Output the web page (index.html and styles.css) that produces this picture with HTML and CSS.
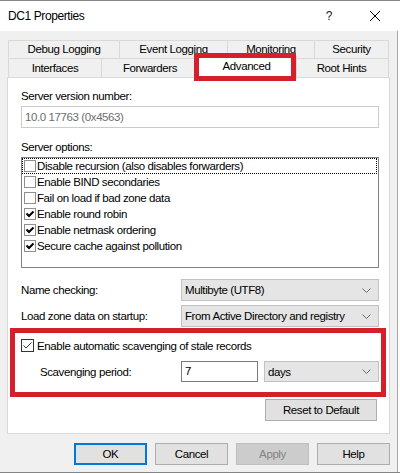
FILE: index.html
```html
<!DOCTYPE html>
<html lang="en">
<head>
    <meta charset="UTF-8">
    <title>DC1 Properties</title>
    <link rel="stylesheet" href="styles.css">
</head>
<body>
    <div class="window">
        <!-- Title Bar -->
        <div class="titlebar">
            <span class="title">DC1 Properties</span>
            <span class="caption-btn help">?</span>
            <span class="caption-btn">
                <svg width="10" height="10" viewBox="0 0 10 10"><path d="M0 0 L10 10 M10 0 L0 10" stroke="#000" stroke-width="1" fill="none"/></svg>
            </span>
        </div>

        <div class="dialog">
            <!-- Tabs -->
            <div class="tabs">
                <div class="tab-row">
                    <div class="tab w-debug">Debug Logging</div>
                    <div class="tab w-event">Event Logging</div>
                    <div class="tab w-monitor">Monitoring</div>
                    <div class="tab w-security">Security</div>
                </div>
                <div class="tab-row front">
                    <div class="tab w-interfaces">Interfaces</div>
                    <div class="tab w-forwarders">Forwarders</div>
                    <div class="tab selected">Advanced<span class="highlight"></span></div>
                    <div class="tab w-roothints">Root Hints</div>
                </div>
            </div>

            <!-- Advanced Panel -->
            <div class="panel">
                <div class="field-label">Server version number:</div>
                <div class="readonly-box">10.0 17763 (0x4563)</div>

                <div class="field-label options-label">Server options:</div>
                <div class="listbox">
                    <div class="list-item focused"><span class="cb"></span>Disable recursion (also disables forwarders)</div>
                    <div class="list-item"><span class="cb"></span>Enable BIND secondaries</div>
                    <div class="list-item"><span class="cb"></span>Fail on load if bad zone data</div>
                    <div class="list-item"><span class="cb"><svg width="10" height="10" viewBox="0 0 10 10"><path d="M1.5 4.5 L4 7 L8.5 2.5" stroke="#000" stroke-width="2" fill="none"/></svg></span>Enable round robin</div>
                    <div class="list-item"><span class="cb"><svg width="10" height="10" viewBox="0 0 10 10"><path d="M1.5 4.5 L4 7 L8.5 2.5" stroke="#000" stroke-width="2" fill="none"/></svg></span>Enable netmask ordering</div>
                    <div class="list-item"><span class="cb"><svg width="10" height="10" viewBox="0 0 10 10"><path d="M1.5 4.5 L4 7 L8.5 2.5" stroke="#000" stroke-width="2" fill="none"/></svg></span>Secure cache against pollution</div>
                </div>

                <div class="option-row first-row">
                    <span class="row-label">Name checking:</span>
                    <div class="combo">Multibyte (UTF8)<svg class="chevron" width="9" height="5" viewBox="0 0 9 5"><path d="M0.5 0.5 L4.5 4.5 L8.5 0.5" stroke="#6b6b6b" fill="none"/></svg></div>
                </div>
                <div class="option-row">
                    <span class="row-label">Load zone data on startup:</span>
                    <div class="combo">From Active Directory and registry<svg class="chevron" width="9" height="5" viewBox="0 0 9 5"><path d="M0.5 0.5 L4.5 4.5 L8.5 0.5" stroke="#6b6b6b" fill="none"/></svg></div>
                </div>

                <!-- Scavenging (highlighted) -->
                <div class="scavenging">
                    <div class="check-row">
                        <span class="checkbox"><svg width="11" height="11" viewBox="0 0 11 11"><path d="M1.5 5.5 L4 8 L9.5 2.5" stroke="#333" stroke-width="1" fill="none"/></svg></span>
                        Enable automatic scavenging of stale records
                    </div>
                    <div class="option-row period-row">
                        <span class="row-label indent">Scavenging period:</span>
                        <div class="textbox">7</div>
                        <div class="combo">days<svg class="chevron" width="9" height="5" viewBox="0 0 9 5"><path d="M0.5 0.5 L4.5 4.5 L8.5 0.5" stroke="#6b6b6b" fill="none"/></svg></div>
                    </div>
                </div>

                <div class="reset-row">
                    <button class="btn reset">Reset to Default</button>
                </div>
            </div>

            <!-- Dialog Buttons -->
            <div class="buttons">
                <button class="btn default">OK</button>
                <button class="btn">Cancel</button>
                <button class="btn disabled">Apply</button>
                <button class="btn">Help</button>
            </div>
        </div>
    </div>
</body>
</html>
```

FILE: styles.css
```css
/* General Reset */
* {
    margin: 0;
    padding: 0;
    box-sizing: border-box;
}

body {
    font-family: "Liberation Sans", Arial, sans-serif;
    font-size: 11.5px;
    letter-spacing: -0.4px;
    color: #000;
    background-color: #fff;
    width: 400px;
    height: 474px;
    overflow: hidden;
}

.window {
    height: 473px;
    border-top: 1px solid #858585;
    border-bottom: 1px solid #858585;
    display: flex;
    flex-direction: column;
}

/* Title Bar */
.titlebar {
    height: 30px;
    display: flex;
    align-items: center;
    padding-right: 2px;
}

.title {
    flex: 1;
    padding-left: 8px;
    font-size: 12px;
}

.caption-btn {
    width: 46px;
    height: 30px;
    display: flex;
    align-items: center;
    justify-content: center;
}

.caption-btn.help {
    font-size: 12px;
    color: #222;
}

/* Dialog Body */
.dialog {
    flex: 1;
    background-color: #f0f0f0;
    margin-right: 2px;
    border-right: 1px solid #a8a8a8;
    padding: 9px 0 0 8px;
}

/* Tabs */
.tab-row {
    display: flex;
    align-items: flex-start;
}

.tab {
    height: 19px;
    line-height: 17px;
    border: 1px solid #d9d9d9;
    margin-left: -1px;
    text-align: center;
    white-space: nowrap;
    background-color: #f0f0f0;
}

.tab:first-child {
    margin-left: 0;
}

.front {
    margin-top: -1px;
}

.front .tab {
    height: 20px;
    line-height: 18px;
}

.w-debug { width: 112px; }
.w-event { width: 109px; }
.w-monitor { width: 88px; }
.w-security { width: 75px; }
.w-interfaces { width: 94px; }
.w-forwarders { width: 98px; }
.w-roothints { width: 95px; }

.front .tab.selected {
    position: relative;
    z-index: 1;
    width: 101px;
    height: 23px;
    line-height: 19px;
    margin: -2px -2px -2px -3px;
    background-color: #fff;
    border-bottom: none;
}

/* Red annotation box */
.highlight {
    position: absolute;
    left: -3px;
    right: 0;
    top: -4px;
    bottom: -2px;
    border: 5px solid #d5202c;
}

/* Panel */
.panel {
    width: 383px;
    height: 357px;
    margin: -1px 0 0 -1px;
    border: 1px solid #d9d9d9;
    background-color: #fff;
    padding: 11px 10px 0 13px;
}

.field-label {
    line-height: 15px;
}

.options-label {
    margin-top: 12px;
}

.readonly-box {
    margin-top: 2px;
    height: 22px;
    line-height: 20px;
    border: 1px solid #cccccc;
    padding-left: 3px;
    color: #6d6d6d;
}

/* Server options list */
.listbox {
    margin-top: 2px;
    height: 111px;
    border: 1px solid #828282;
}

.list-item {
    height: 16px;
    display: flex;
    align-items: center;
    padding-left: 2px;
    white-space: nowrap;
}

.list-item.focused {
    outline: 1px dotted #000;
    outline-offset: -1px;
    margin-right: 1px;
}

.cb {
    width: 12px;
    height: 12px;
    margin-right: 1px;
    border: 1px solid #8e8f8f;
    background-color: #fff;
    display: flex;
    align-items: center;
    justify-content: center;
}

/* Rows with combos */
.option-row {
    display: flex;
    align-items: center;
    height: 22px;
    margin-top: 4px;
}

.first-row {
    margin-top: 11px;
}

.row-label {
    width: 160px;
    flex-shrink: 0;
}

.row-label.indent {
    padding-left: 19px;
}

.combo {
    flex: 1;
    height: 22px;
    display: flex;
    align-items: center;
    justify-content: space-between;
    white-space: nowrap;
    background-color: #e5e5e5;
    border: 1px solid #c2c2c2;
    padding: 0 7px 0 3px;
}

.textbox {
    width: 77px;
    height: 21px;
    line-height: 19px;
    border: 1px solid #7a7a7a;
    padding-left: 3px;
    margin-right: 6px;
}

/* Scavenging group */
.scavenging {
    margin: 1px -7px 0 -11px;
    border: 5px solid #d5202c;
    padding: 6px 2px 10px 6px;
}

.check-row {
    display: flex;
    align-items: center;
    height: 13px;
}

.checkbox {
    width: 13px;
    height: 13px;
    border: 1px solid #333;
    margin-right: 3px;
    display: flex;
    align-items: center;
    justify-content: center;
}

.period-row {
    margin-top: 9px;
    height: 21px;
}

.period-row .combo {
    height: 21px;
}

/* Buttons */
.reset-row {
    display: flex;
    justify-content: flex-end;
    margin-top: 2px;
    padding-right: 2px;
}

.btn {
    font-family: inherit;
    font-size: 11.5px;
    letter-spacing: inherit;
    color: #000;
    height: 22px;
    width: 73px;
    background-color: #e1e1e1;
    border: 1px solid #adadad;
}

.btn.reset {
    width: 112px;
}

.btn.default {
    border: 2px solid #0078d7;
}

.btn.disabled {
    background-color: #cccccc;
    border-color: #bfbfbf;
    color: #838383;
}

.buttons {
    display: flex;
    justify-content: flex-end;
    gap: 8px;
    width: 383px;
    margin: 9px 0 0 -1px;
}
```
